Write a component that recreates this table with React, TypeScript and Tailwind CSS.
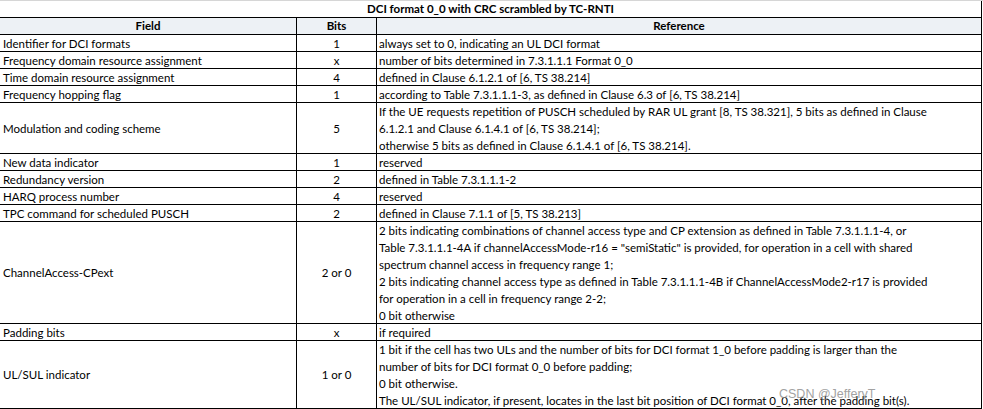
import React from "react";

type Row = { field: string; bits: string; ref: string[]; h: string };

const rows: Row[] = [
  { field: "Identifier for DCI formats", bits: "1", ref: ["always set to 0, indicating an UL DCI format"], h: "h-[17px]" },
  { field: "Frequency domain resource assignment", bits: "x", ref: ["number of bits determined in 7.3.1.1.1 Format 0_0"], h: "h-[17px]" },
  { field: "Time domain resource assignment", bits: "4", ref: ["defined in Clause 6.1.2.1 of [6, TS 38.214]"], h: "h-[17px]" },
  { field: "Frequency hopping flag", bits: "1", ref: ["according to Table 7.3.1.1.1-3, as defined in Clause 6.3 of [6, TS 38.214]"], h: "h-[17px]" },
  {
    field: "Modulation and coding scheme",
    bits: "5",
    ref: [
      "If the UE requests repetition of PUSCH scheduled by RAR UL grant [8, TS 38.321], 5 bits as defined in Clause",
      "6.1.2.1 and Clause 6.1.4.1 of [6, TS 38.214];",
      "otherwise 5 bits as defined in Clause 6.1.4.1 of [6, TS 38.214].",
    ],
    h: "h-[51px]",
  },
  { field: "New data indicator", bits: "1", ref: ["reserved"], h: "h-[17px]" },
  { field: "Redundancy version", bits: "2", ref: ["defined in Table 7.3.1.1.1-2"], h: "h-[17px]" },
  { field: "HARQ process number", bits: "4", ref: ["reserved"], h: "h-[17px]" },
  { field: "TPC command for scheduled PUSCH", bits: "2", ref: ["defined in Clause 7.1.1 of [5, TS 38.213]"], h: "h-[17px]" },
  {
    field: "ChannelAccess-CPext",
    bits: "2 or 0",
    ref: [
      "2 bits indicating combinations of channel access type and CP extension as defined in Table 7.3.1.1.1-4, or",
      'Table 7.3.1.1.1-4A if channelAccessMode-r16 = "semiStatic" is provided, for operation in a cell with shared',
      "spectrum channel access in frequency range 1;",
      "2 bits indicating channel access type as defined in Table 7.3.1.1.1-4B if ChannelAccessMode2-r17 is provided",
      "for operation in a cell in frequency range 2-2;",
      "0 bit otherwise",
    ],
    h: "h-[102px]",
  },
  { field: "Padding bits", bits: "x", ref: ["if required"], h: "h-[17px]" },
  {
    field: "UL/SUL indicator",
    bits: "1 or 0",
    ref: [
      "1 bit if the cell has two ULs and the number of bits for DCI format 1_0 before padding is larger than the",
      "number of bits for DCI format 0_0 before padding;",
      "0 bit otherwise.",
      "The UL/SUL indicator, if present, locates in the last bit position of DCI format 0_0, after the padding bit(s).",
    ],
    h: "h-[68px]",
  },
];

export default function App() {
  return (
    <div
      className="relative w-[983px] h-[409px] bg-white border-t border-[#d6d6d6] text-[11.5px] text-black overflow-hidden"
      style={{ fontFamily: "Lato, 'Open Sans', sans-serif" }}
    >
      <div className="w-[982px] h-[17px] border-b border-r border-black flex items-center justify-center font-bold leading-[16px]">
        DCI format 0_0 with CRC scrambled by TC-RNTI
      </div>
      <div className="flex w-[982px] h-[17px] border-b border-black bg-[#edf1f5] font-bold leading-[16px]">
        <div className="w-[297px] border-r border-black flex items-center justify-center">Field</div>
        <div className="w-[80px] border-r border-black flex items-center justify-center">Bits</div>
        <div className="w-[605px] border-r border-black flex items-center justify-center">Reference</div>
      </div>
      {rows.map((r, i) => (
        <div key={i} className={`flex w-[982px] border-b border-black ${r.h}`}>
          <div className="w-[297px] border-r border-black flex items-center pl-[3px] pt-px leading-[16px] whitespace-nowrap">
            {r.field}
          </div>
          <div className="w-[80px] border-r border-black flex items-center justify-center pt-px leading-[16px]">
            {r.bits}
          </div>
          <div className="w-[605px] border-r border-black pl-[2px] pt-px flex flex-col justify-center whitespace-nowrap">
            {r.ref.map((l, j) => (
              <div key={j} className={r.ref.length > 1 ? "leading-[17px]" : "leading-[16px]"}>
                {l}
              </div>
            ))}
          </div>
        </div>
      ))}
      <div
        className="absolute left-[779px] top-[385px] text-[12.5px] text-[#8c8c8c] opacity-80 leading-[16px] pointer-events-none"
        style={{ fontFamily: "'Liberation Sans', Arial, sans-serif" }}
      >
        CSDN @JefferyT
      </div>
    </div>
  );
}
